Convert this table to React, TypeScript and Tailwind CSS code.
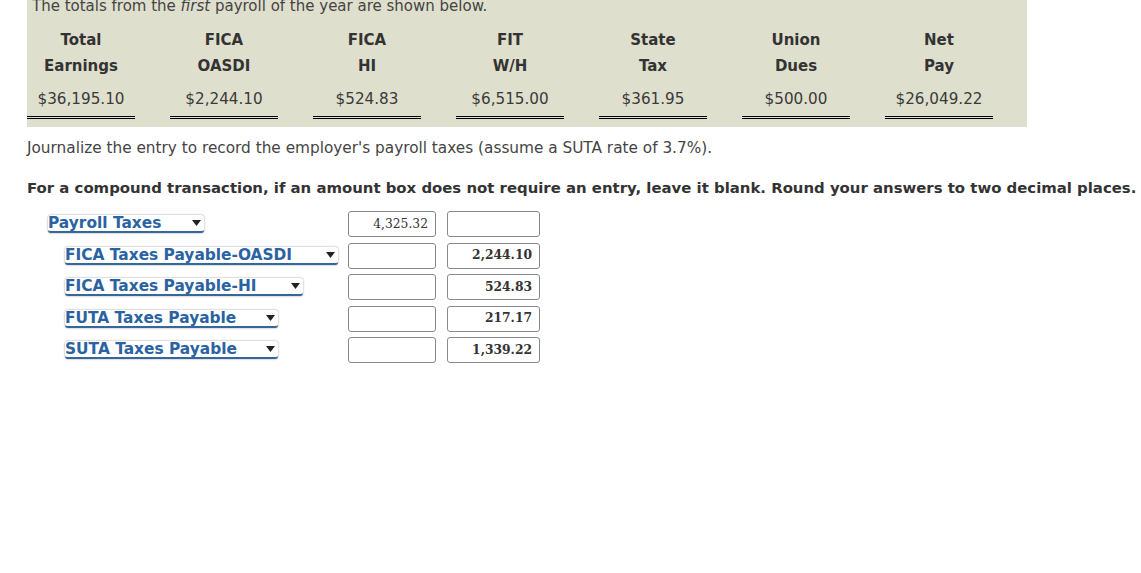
import React from 'react'

const columns = [
  { top: 'Total', bottom: 'Earnings', value: '$36,195.10' },
  { top: 'FICA', bottom: 'OASDI', value: '$2,244.10' },
  { top: 'FICA', bottom: 'HI', value: '$524.83' },
  { top: 'FIT', bottom: 'W/H', value: '$6,515.00' },
  { top: 'State', bottom: 'Tax', value: '$361.95' },
  { top: 'Union', bottom: 'Dues', value: '$500.00' },
  { top: 'Net', bottom: 'Pay', value: '$26,049.22' },
]

interface EntryRow {
  account: string
  width: string
  indent: boolean
  debit: string
  credit: string
}

const rows: EntryRow[] = [
  { account: 'Payroll Taxes', width: 'w-[156px]', indent: false, debit: '4,325.32', credit: '' },
  { account: 'FICA Taxes Payable-OASDI', width: 'w-[273px]', indent: true, debit: '', credit: '2,244.10' },
  { account: 'FICA Taxes Payable-HI', width: 'w-[238px]', indent: true, debit: '', credit: '524.83' },
  { account: 'FUTA Taxes Payable', width: 'w-[213px]', indent: true, debit: '', credit: '217.17' },
  { account: 'SUTA Taxes Payable', width: 'w-[213px]', indent: true, debit: '', credit: '1,339.22' },
]

const AccountSelect: React.FC<{ label: string; width: string }> = ({ label, width }) => (
  <div
    className={`${width} h-[18px] flex items-center justify-between bg-white rounded-[3px] shadow-[0_0_2px_rgba(0,0,0,0.45)] border-b-2 border-[#35679b] pr-[3px]`}
  >
    <span className="text-[15.4px] leading-[16px] font-bold text-[#2b62a1] whitespace-nowrap">{label}</span>
    <svg width="9" height="6" viewBox="0 0 9 6">
      <path d="M0 0 H9 L4.5 6 Z" fill="#222" />
    </svg>
  </div>
)

const AmountBox: React.FC<{ value: string; bold?: boolean; width: string }> = ({ value, bold, width }) => (
  <div
    className={`${width} h-[26px] flex items-center justify-end px-[7px] bg-white border border-[#8a8a8a] rounded-[3px] font-['DejaVu_Serif',serif] text-[12.3px] text-[#333] ${
      bold ? 'font-bold' : ''
    }`}
  >
    {value}
  </div>
)

export default function App() {
  return (
    <div className="bg-white min-h-[573px] w-[1141px] overflow-hidden font-['DejaVu_Sans',sans-serif] text-[#333]">
      {/* Totals panel */}
      <div className="ml-[27px] w-[1000px] h-[127px] bg-[#dfdfcd] overflow-hidden">
        <p className="pl-[5px] -mt-[4px] text-[15px] leading-[20px] text-[#444]">
          The totals from the <i>first</i> payroll of the year are shown below.
        </p>
        <div className="grid grid-cols-[repeat(7,108px)] gap-x-[35px] mt-[11px]">
          {columns.map((c, i) => (
            <div key={i} className="flex flex-col items-center">
              <div className="font-bold text-[15px] leading-[26px]">{c.top}</div>
              <div className="font-bold text-[15px] leading-[26px]">{c.bottom}</div>
              <div className="mt-[10px] text-[15.2px] leading-[20px] text-[#3a3a3a]">{c.value}</div>
              <div className="w-full mt-[7px] border-b-[3px] border-double border-black" />
            </div>
          ))}
        </div>
      </div>

      <p className="ml-[27px] mt-[11px] text-[15.3px] leading-[20px] text-[#444]">
        Journalize the entry to record the employer's payroll taxes (assume a SUTA rate of 3.7%).
      </p>
      <p className="ml-[27px] mt-[20px] text-[14.9px] leading-[20px] font-bold whitespace-nowrap">
        For a compound transaction, if an amount box does not require an entry, leave it blank. Round your answers to two decimal places.
      </p>

      {/* Journal entry */}
      <div className="ml-[48px] mt-[13px] flex flex-col gap-[5.5px]">
        {rows.map((r, i) => (
          <div key={i} className="flex items-center">
            <div className={`w-[300px] flex ${r.indent ? 'pl-[17px]' : ''}`}>
              <AccountSelect label={r.account} width={r.width} />
            </div>
            <AmountBox value={r.debit} width="w-[88px]" />
            <div className="w-[11px]" />
            <AmountBox value={r.credit} bold width="w-[93px]" />
          </div>
        ))}
      </div>
    </div>
  )
}
